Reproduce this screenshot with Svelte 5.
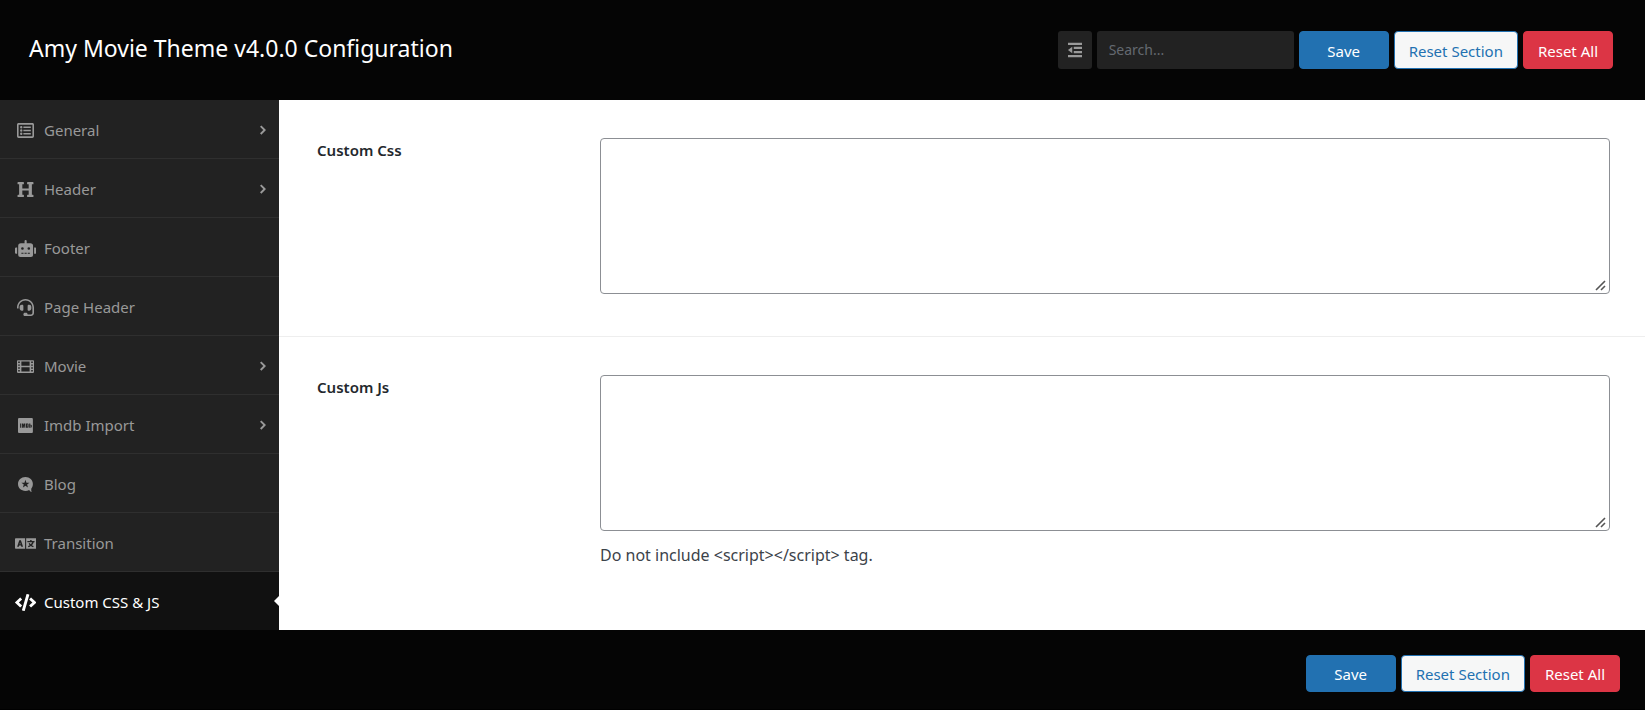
<script lang="ts">
	type Shape = { width: number; d: string };

	const icons: Record<string, Shape> = {
		list: {
			width: 512,
			d: 'M464 32H48C21.49 32 0 53.49 0 80v352c0 26.51 21.49 48 48 48h416c26.51 0 48-21.49 48-48V80c0-26.51-21.49-48-48-48zm-6 400H54a6 6 0 0 1-6-6V86a6 6 0 0 1 6-6h404a6 6 0 0 1 6 6v340a6 6 0 0 1-6 6zM192 136h224v48H192zM192 232h224v48H192zM192 328h224v48H192zM164 160a36 36 0 1 1-72 0a36 36 0 1 1 72 0zM164 256a36 36 0 1 1-72 0a36 36 0 1 1 72 0zM164 352a36 36 0 1 1-72 0a36 36 0 1 1 72 0z',
		},
		heading: {
			width: 512,
			d: 'M448 96v320h32a16 16 0 0 1 16 16v32a16 16 0 0 1-16 16H320a16 16 0 0 1-16-16v-32a16 16 0 0 1 16-16h32V288H160v128h32a16 16 0 0 1 16 16v32a16 16 0 0 1-16 16H32a16 16 0 0 1-16-16v-32a16 16 0 0 1 16-16h32V96H32a16 16 0 0 1-16-16V48a16 16 0 0 1 16-16h160a16 16 0 0 1 16 16v32a16 16 0 0 1-16 16h-32v128h192V96h-32a16 16 0 0 1-16-16V48a16 16 0 0 1 16-16h160a16 16 0 0 1 16 16v32a16 16 0 0 1-16 16z',
		},
		robot: {
			width: 640,
			d: 'M32 224H64V416H32A32 32 0 0 1 0 384V256A32 32 0 0 1 32 224Zm512-48V448a64 64 0 0 1-64 64H160a64 64 0 0 1-64-64V176a80 80 0 0 1 80-80H288V32a32 32 0 0 1 64 0V96H464A80 80 0 0 1 544 176ZM264 256a40 40 0 1 0-40 40A40 40 0 0 0 264 256Zm-8 128H192v32h64Zm96 0H288v32h64ZM456 256a40 40 0 1 0-40 40A40 40 0 0 0 456 256Zm-8 128H384v32h64ZM640 256V384a32 32 0 0 1-32 32H576V224h32A32 32 0 0 1 640 256Z',
		},
		headset: {
			width: 512,
			d: 'M192 208c0-17.67-14.33-32-32-32h-16c-35.35 0-64 28.65-64 64v48c0 35.35 28.65 64 64 64h16c17.67 0 32-14.33 32-32V208zm176 144c35.35 0 64-28.65 64-64v-48c0-35.35-28.65-64-64-64h-16c-17.67 0-32 14.33-32 32v112c0 17.67 14.33 32 32 32h16zM256 0C113.18 0 4.58 118.83 0 256v16c0 8.84 7.16 16 16 16h16c8.84 0 16-7.16 16-16v-16c0-114.69 93.31-208 208-208s208 93.31 208 208h-.12c.08 2.43.12 165.72.12 165.72 0 23.35-18.93 42.28-42.28 42.28H320c0-26.51-21.49-48-48-48h-32c-26.51 0-48 21.49-48 48s21.49 48 48 48h181.72c49.86 0 90.28-40.42 90.28-90.28V256C507.42 118.83 398.82 0 256 0z',
		},
		film: {
			width: 512,
			d: 'M24 64H488a24 24 0 0 1 24 24V424a24 24 0 0 1-24 24H24a24 24 0 0 1-24-24V88a24 24 0 0 1 24-24zM36 108v40h48v-40zM36 192v40h48v-40zM36 280v40h48v-40zM36 364v40h48v-40zM428 108v40h48v-40zM428 192v40h48v-40zM428 280v40h48v-40zM428 364v40h48v-40zM132 108v124h248V108zM132 280v124h248V280z',
		},
		imdb: {
			width: 448,
			d: 'M32 32H416a32 32 0 0 1 32 32V448a32 32 0 0 1-32 32H32a32 32 0 0 1-32-32V64a32 32 0 0 1 32-32zM64 192v128h34V192zM120 192v128h28v-76l12 76h20l12-76v76h28V192h-42l-9 58-9-58zM240 192v128h42c28 0 38-12 38-36v-56c0-24-10-36-38-36zm32 26c12 0 14 4 14 14v48c0 10-2 14-14 14zM336 192v128h28l4-8c30 18 48 4 48-24v-24c0-32-22-38-46-24v-48zm34 66c0-10 14-10 14 0v34c0 10-14 10-14 0z',
		},
		blog: {
			width: 448,
			d: 'M224 32C96 32 0 124 0 240s96 208 224 208c42 0 80-10 112-27 18 28 38 47 64 59 8 3 10-3 8-10-8-22-12-60-6-94 30-36 46-82 46-136C448 124 352 32 224 32zm0 84l30 86 92 2-72 54 26 88-76-52-76 52 26-88-72-54 92-2z',
		},
		language: {
			width: 640,
			d: 'M24 96H304V416H24a24 24 0 0 1-24-24V120a24 24 0 0 1 24-24zM128 160L64 352h52l10-34h54l10 34h52L178 160zm25 68l15 52h-30zM336 96H616a24 24 0 0 1 24 24V392a24 24 0 0 1-24 24H336zM456 152v28h-84v42h145c-8 20-22 40-41 59-12-12-22-25-29-39l-36 17c9 19 20 35 33 49-17 11-36 20-56 27l19 37c27-10 50-22 71-37 20 15 43 27 67 37l19-37c-19-7-37-16-53-27 27-26 46-56 54-86h23v-42h-88v-28z',
		},
		code: {
			width: 640,
			d: 'M278.9 511.5l-61-17.7c-6.4-1.8-10-8.5-8.2-14.9L346.2 8.7c1.8-6.4 8.5-10 14.9-8.2l61 17.7c6.4 1.8 10 8.5 8.2 14.9L293.8 503.3c-1.9 6.4-8.5 10.1-14.9 8.2zm-114-112.2l43.5-46.4c4.6-4.9 4.3-12.7-.8-17.2L117 256l90.6-79.7c5.1-4.5 5.5-12.3.8-17.2l-43.5-46.4c-4.5-4.8-12.1-5.1-17-.5L3.8 247.2c-5.1 4.7-5.1 12.8 0 17.5l144.1 135.1c4.9 4.6 12.5 4.4 17-.5zm327.2.6l144.1-135.1c5.1-4.7 5.1-12.8 0-17.5L492.1 112.1c-4.8-4.5-12.4-4.3-17 .5L431.6 159c-4.6 4.9-4.3 12.7.8 17.2L523 256l-90.6 79.7c-5.1 4.5-5.5 12.3-.8 17.2l43.5 46.4c4.5 4.9 12.1 5.1 17 .6z',
		},
		angle: {
			width: 256,
			d: 'M76 108L224 256 76 404 32 360 136 256 32 152z',
		},
		outdent: {
			width: 448,
			d: 'M0 24H448V96H0zM184 152H448V224H184zM184 288H448V360H184zM0 416H448V488H0zM136 152V360L8 266a12 12 0 0 1 0-18z',
		},
	};

	const sections = [
		{ id: 'general', label: 'General', icon: 'list', sub: true },
		{ id: 'header', label: 'Header', icon: 'heading', sub: true },
		{ id: 'footer', label: 'Footer', icon: 'robot' },
		{ id: 'page-header', label: 'Page Header', icon: 'headset' },
		{ id: 'movie', label: 'Movie', icon: 'film', sub: true },
		{ id: 'imdb', label: 'Imdb Import', icon: 'imdb', sub: true },
		{ id: 'blog', label: 'Blog', icon: 'blog' },
		{ id: 'transition', label: 'Transition', icon: 'language' },
		{ id: 'custom', label: 'Custom CSS & JS', icon: 'code' },
	];

	let active = $state('custom');
	let search = $state('');
	let customCss = $state('');
	let customJs = $state('');

	function resetSection() {
		customCss = '';
		customJs = '';
	}

	function resetAll() {
		resetSection();
		search = '';
	}
</script>

{#snippet icon(name: string)}
	<svg class="icon" viewBox="0 0 {icons[name].width} 512" aria-hidden="true">
		<path fill-rule="evenodd" d={icons[name].d} />
	</svg>
{/snippet}

{#snippet actions()}
	<button type="submit" class="btn btn-primary">Save</button>
	<button type="button" class="btn btn-secondary" onclick={resetSection}>Reset Section</button>
	<button type="button" class="btn btn-danger" onclick={resetAll}>Reset All</button>
{/snippet}

<form class="options" onsubmit={(e) => e.preventDefault()}>
	<header class="header">
		<h1>Amy Movie Theme v4.0.0 Configuration</h1>
		<div class="actions">
			<button type="button" class="expand" aria-label="Show all options">
				{@render icon('outdent')}
			</button>
			<input class="search" type="text" placeholder="Search..." aria-label="Search" bind:value={search} />
			{@render actions()}
		</div>
	</header>

	<div class="wrapper">
		<nav class="nav">
			<ul>
				{#each sections as section (section.id)}
					<li>
						<a
							href="#{section.id}"
							class:active={active === section.id}
							onclick={() => (active = section.id)}
						>
							<span class="nav-icon">{@render icon(section.icon)}</span>
							<span class="nav-label">{section.label}</span>
							{#if section.sub}
								<span class="arrow">{@render icon('angle')}</span>
							{/if}
						</a>
					</li>
				{/each}
			</ul>
		</nav>

		<main class="content">
			<div class="field">
				<label for="custom-css">Custom Css</label>
				<div class="fieldset">
					<textarea id="custom-css" bind:value={customCss}></textarea>
				</div>
			</div>
			<div class="field">
				<label for="custom-js">Custom Js</label>
				<div class="fieldset">
					<textarea id="custom-js" aria-describedby="js-hint" bind:value={customJs}></textarea>
					<p id="js-hint">Do not include &lt;script&gt;&lt;/script&gt; tag.</p>
				</div>
			</div>
		</main>
	</div>

	<footer class="footer">
		<div class="actions">
			{@render actions()}
		</div>
	</footer>
</form>

<style>
	:global(body) {
		background: #000;
	}

	.options {
		font-family: 'Segoe UI', 'Noto Sans', 'Open Sans', sans-serif;
		font-size: 15px;
		color: #3c434a;
	}

	.options *,
	.options *::after {
		box-sizing: border-box;
	}

	.icon {
		display: block;
		height: 16px;
		fill: currentColor;
	}

	.header {
		display: flex;
		align-items: center;
		justify-content: space-between;
		min-height: 100px;
		padding: 0 32px 0 29px;
		background: #050505;
	}

	h1 {
		margin: 0;
		padding-bottom: 4px;
		font-size: 23px;
		font-weight: 400;
		line-height: 32px;
		color: #fff;
	}

	.actions {
		display: flex;
		gap: 5px;
	}

	.expand {
		display: flex;
		align-items: center;
		justify-content: center;
		width: 34px;
		padding: 0;
		border: 0;
		border-radius: 3px;
		background: #222;
		color: #999;
		cursor: pointer;
	}

	.search {
		width: 197px;
		padding: 0 12px 2px;
		border: 0;
		border-radius: 3px;
		background: #222;
		color: #ccc;
		font: inherit;
		font-size: 14px;
	}

	.search::placeholder {
		color: #646970;
	}

	.btn {
		height: 38px;
		padding: 2px 14px 0;
		border: 1px solid;
		border-radius: 4px;
		font: inherit;
		white-space: nowrap;
		cursor: pointer;
	}

	.btn-primary {
		min-width: 90px;
		border-color: #2271b1;
		background: #2271b1;
		color: #fff;
	}

	.btn-secondary {
		border-color: #2271b1;
		background: #f6f7f7;
		color: #2271b1;
	}

	.btn-danger {
		border-color: #dc3545;
		background: #dc3545;
		color: #fff;
	}

	.wrapper {
		display: flex;
		background: #fff;
	}

	.nav {
		flex: 0 0 279px;
		background: #222;
	}

	.nav ul {
		margin: 0;
		padding: 0;
		list-style: none;
	}

	.nav li + li {
		border-top: 1px solid #2f2f2f;
	}

	.nav a {
		position: relative;
		display: flex;
		align-items: center;
		height: 58px;
		padding: 2px 12px 0 15px;
		color: #999;
		text-decoration: none;
	}

	.nav a.active {
		background: #111;
		color: #fff;
	}

	/* notch pointing out of the active item into the content */
	.nav a.active::after {
		content: '';
		position: absolute;
		top: 50%;
		right: 0;
		margin-top: -5px;
		border: 5px solid transparent;
		border-left-width: 0;
		border-right-color: #fff;
	}

	.nav-icon {
		display: flex;
		justify-content: center;
		width: 21px;
		margin-right: 8px;
	}

	.nav-icon .icon {
		flex: none;
		height: 17px;
	}

	.nav-label {
		flex: 1;
	}

	.content {
		flex: 1;
		min-width: 0;
	}

	.field {
		display: flex;
		padding: 38px 35px 42px 38px;
	}

	.field + .field {
		border-top: 1px solid #eee;
	}

	.field label {
		flex: 0 0 283px;
		font-size: 15px;
		font-weight: 600;
		line-height: 24px;
		color: #23282d;
	}

	.fieldset {
		flex: 1;
		min-width: 0;
	}

	textarea {
		display: block;
		width: 100%;
		height: 156px;
		padding: 8px 12px;
		border: 1px solid #8c8f94;
		border-radius: 4px;
		font: inherit;
		resize: vertical;
	}

	textarea::-webkit-resizer {
		background: url("data:image/svg+xml,%3Csvg xmlns='http://www.w3.org/2000/svg' width='15' height='15'%3E%3Cpath d='M2 12l9-9M7 12l4-4' stroke='%23555' stroke-width='1.6'/%3E%3C/svg%3E")
			no-repeat right bottom;
	}

	p {
		margin: 13px 0 0;
		font-size: 16px;
		line-height: 23px;
	}

	.footer {
		display: flex;
		justify-content: flex-end;
		padding: 25px 25px 17px;
		background: #050505;
	}

	.footer .btn {
		height: 37px;
		padding-top: 0;
	}
</style>
